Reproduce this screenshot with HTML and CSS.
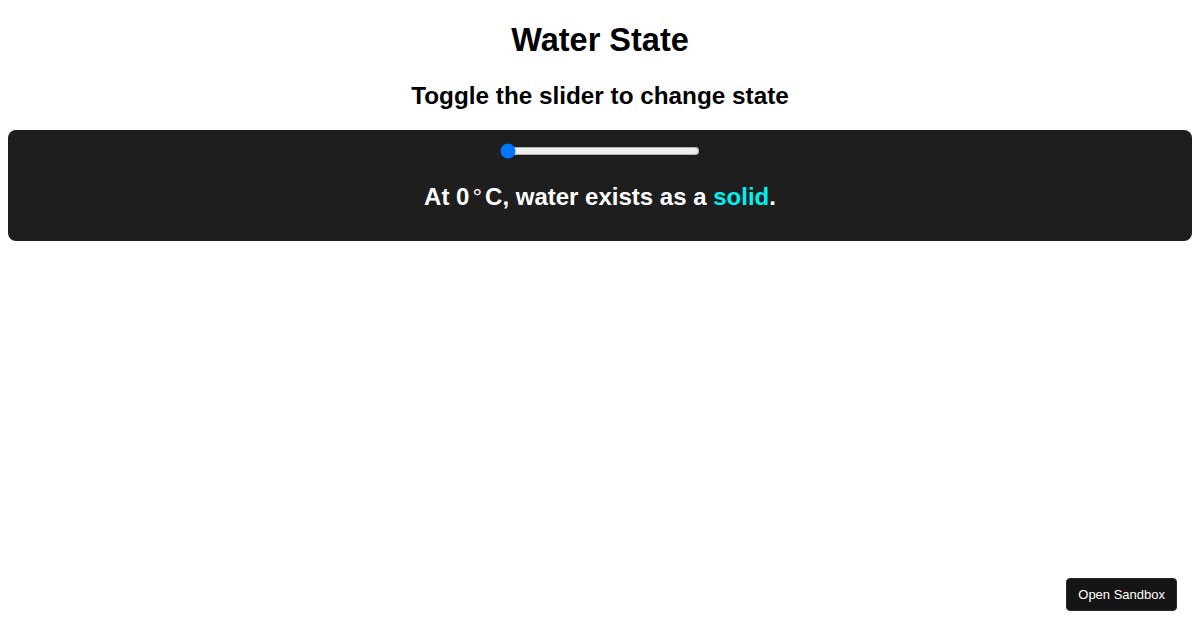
FILE: index.html
```html
<!DOCTYPE html>
<html lang="en">
<head>
    <meta charset="UTF-8">
    <meta name="viewport" content="width=device-width, initial-scale=1.0">
    <title>Water State</title>
    <link rel="stylesheet" href="styles.css">
</head>
<body>
    <h1>Water State</h1>
    <h2>Toggle the slider to change state</h2>

    <div class="panel">
        <input type="range" id="temp" class="slider" min="0" max="100" value="0">
        <p class="state">At <span id="tempValue">0</span><span class="deg">°</span>C, water exists as a <span id="stateName" class="solid">solid</span>.</p>
    </div>

    <a class="sandbox-btn" href="#">Open Sandbox</a>

    <script>
        const slider = document.getElementById('temp');
        const tempValue = document.getElementById('tempValue');
        const stateName = document.getElementById('stateName');

        function updateState() {
            const t = parseInt(slider.value, 10);
            tempValue.innerText = t;
            let state = 'liquid';
            if (t <= 0) state = 'solid';
            else if (t >= 100) state = 'gas';
            stateName.innerText = state;
            stateName.className = state;
        }

        slider.addEventListener('input', updateState);
        updateState();
    </script>
</body>
</html>
```

FILE: styles.css
```css
body {
    font-family: "Liberation Sans", Arial, sans-serif;
    background-color: #fff;
    color: #000;
    text-align: center;
}
h1 {
    font-size: 32.5px;
    margin: 14px 0 23px;
}
h2 {
    font-size: 24.3px;
    margin: 23px 0 0;
}
.panel {
    margin-top: 20px;
    background-color: #1e1e1e;
    color: #fff;
    border-radius: 8px;
    padding: 11px 20px 30px;
}
.slider {
    width: 200px;
    margin: 2px 0 0;
}
.state {
    font-size: 24px;
    font-weight: bold;
    margin: 20px 0 0;
}
.deg {
    font-weight: normal;
    margin: 0 3px;
}
.solid {
    color: #00f0f0;
}
.liquid {
    color: #4da3ff;
}
.gas {
    color: #ddd;
}
.sandbox-btn {
    position: fixed;
    right: 23px;
    bottom: 19px;
    background-color: #151515;
    color: #fff;
    font-size: 13px;
    text-decoration: none;
    padding: 8px 11px;
    border-radius: 4px;
    border: 1px solid #2a2a2a;
}
```
